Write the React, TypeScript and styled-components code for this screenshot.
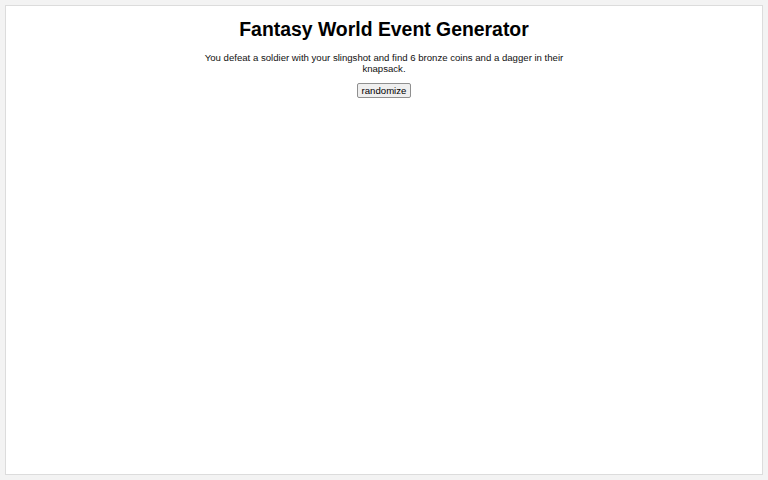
import styled, { createGlobalStyle } from "styled-components";

const GlobalStyle = createGlobalStyle`
    html, body {
        margin: 0;
        padding: 0;
        background: #f3f3f3;
        font-family: "Liberation Sans", Arial, sans-serif;
    }
    #root {
        height: 480px;
        padding: 5px;
        box-sizing: border-box;
        display: flex;
    }
`

const Card = styled.main`
    flex: 1;
    background: #ffffff;
    border: 1px solid #dcdcdc;
    display: flex;
    flex-direction: column;
    align-items: center;
    padding-top: 11px;
`

const Title = styled.h1`
    margin: 0;
    font-size: 19.4px;
    line-height: 24px;
    font-weight: bold;
    color: #000;
`

const Event = styled.p`
    margin: 11px 0 0;
    max-width: 364px;
    text-align: center;
    font-size: 9.6px;
    line-height: 11px;
    color: #111;
`

const Button = styled.button`
    margin-top: 9px;
    font-family: "Liberation Sans", Arial, sans-serif;
    font-size: 9.6px;
    padding: 1px 4px;
    background: #efefef;
    border: 1px solid #8f8f8f;
    border-radius: 2px;
    color: #000;
`

export default function App() {
    return (
        <>
            <GlobalStyle/>
            <Card>
                <Title>Fantasy World Event Generator</Title>
                <Event>
                    You defeat a soldier with your slingshot and find 6 bronze coins and a dagger in their knapsack.
                </Event>
                <Button>randomize</Button>
            </Card>
        </>
    );
}
